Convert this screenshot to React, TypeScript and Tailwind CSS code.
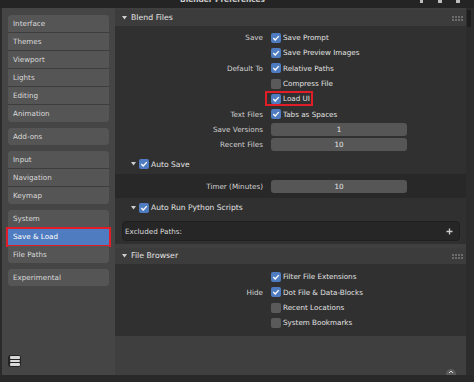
import React from "react";

type Row =
  | { label?: string; kind: "check"; text: string; on: boolean; mark?: boolean }
  | { label: string; kind: "num"; value: string };

const blendRows: Row[] = [
  { label: "Save", kind: "check", text: "Save Prompt", on: true },
  { kind: "check", text: "Save Preview Images", on: true },
  { label: "Default To", kind: "check", text: "Relative Paths", on: true },
  { kind: "check", text: "Compress File", on: false },
  { kind: "check", text: "Load UI", on: true, mark: true },
  { label: "Text Files", kind: "check", text: "Tabs as Spaces", on: true },
  { label: "Save Versions", kind: "num", value: "1" },
  { label: "Recent Files", kind: "num", value: "10" },
];

const browserRows: Row[] = [
  { kind: "check", text: "Filter File Extensions", on: true },
  { label: "Hide", kind: "check", text: "Dot File & Data-Blocks", on: true },
  { kind: "check", text: "Recent Locations", on: false },
  { kind: "check", text: "System Bookmarks", on: false },
];

const groups = [
  ["Interface", "Themes", "Viewport", "Lights", "Editing", "Animation"],
  ["Add-ons"],
  ["Input", "Navigation", "Keymap"],
  ["System", "Save & Load", "File Paths"],
  ["Experimental"],
];

const Checkbox = ({ on }: { on: boolean }) => (
  <span
    className={`flex w-[10px] h-[10px] shrink-0 items-center justify-center rounded-[2px] ${
      on ? "bg-[#4f7cc0]" : "bg-[#5a5a5a]"
    }`}
  >
    {on && (
      <svg width="10" height="10" viewBox="0 0 10 10">
        <path d="M2.3 5.1 L4.2 7 L7.8 3.1" fill="none" stroke="#fff" strokeWidth="1.4" />
      </svg>
    )}
  </span>
);

const NumField = ({ value }: { value: string }) => (
  <div className="w-[136px] h-[13px] rounded-[3px] bg-[#565656] flex items-center justify-center text-[#e6e6e6]">
    {value}
  </div>
);

const Triangle = () => (
  <svg width="5" height="4" viewBox="0 0 5 4" className="shrink-0">
    <path d="M0 0 H5 L2.5 3.5 Z" fill="#cfcfcf" />
  </svg>
);

const DragHandle = () => (
  <svg width="11" height="5" viewBox="0 0 11 5">
    {[0, 3, 6, 9].map((x) =>
      [0, 3].map((y) => <rect key={`${x}-${y}`} x={x} y={y} width="2" height="2" fill="#6b6b6b" />)
    )}
  </svg>
);

const PropRow = ({ row }: { row: Row }) => (
  <div className="flex items-center h-[15.3px]">
    <div className="w-[148px] text-right text-[#d2d2d2] pr-[0px]">{row.label ?? ""}</div>
    <div className="ml-[8px] h-full flex items-center">
      {row.kind === "check" ? (
        <div className="relative h-full flex items-center">
          <Checkbox on={row.on} />
          <span className="ml-[2px] text-[#e2e2e2] whitespace-nowrap">{row.text}</span>
          {row.mark && (
            <span className="absolute -left-[6px] -right-[3px] top-0 bottom-0 border-2 border-[#e11d27]" />
          )}
        </div>
      ) : (
        <NumField value={row.value} />
      )}
    </div>
  </div>
);

const PanelHeader = ({ title }: { title: string }) => (
  <div className="h-[16px] bg-[#3c3c3c] flex items-center pl-[7px] pr-[3px]">
    <Triangle />
    <span className="ml-[4px] text-[7.8px] text-[#e4e4e4]">{title}</span>
    <div className="ml-auto mr-[0px]">
      <DragHandle />
    </div>
  </div>
);

const SubHeader = ({ title, h }: { title: string; h: string }) => (
  <div className={`${h} flex items-center pl-[16px]`}>
    <Triangle />
    <span className="ml-[3px]">
      <Checkbox on />
    </span>
    <span className="ml-[2px] text-[7.6px] text-[#e2e2e2]">{title}</span>
  </div>
);

const Sidebar = () => (
  <div className="w-[113px] bg-[#454545] flex flex-col pt-[7px] px-[6px] pb-[8px]">
    <div className="flex flex-col gap-[6px]">
      {groups.map((g, gi) => (
        <div key={gi} className="rounded-[3px] bg-[#3d3d3d] flex flex-col gap-[1px]">
          {g.map((item, i) => {
            const active = item === "Save & Load";
            return (
              <div
                key={item}
                className={`relative h-[17px] flex items-center pl-[5px] ${
                  active ? "bg-[#4f7cc0] text-white" : "bg-[#555555] text-[#dadada]"
                } ${i === 0 ? "rounded-t-[3px]" : ""} ${i === g.length - 1 ? "rounded-b-[3px]" : ""}`}
              >
                {item}
                {active && <span className="absolute -left-[2px] -right-[2px] -top-[1px] -bottom-[2px] border-2 border-[#e11d27]" />}
              </div>
            );
          })}
        </div>
      ))}
    </div>
    <div className="mt-auto w-[13px] h-[12px] rounded-[3px] bg-[#232323] flex flex-col justify-center gap-[1px] px-[1.5px]">
      <span className="h-[2.5px] rounded-[1px] bg-[#d8d8d8]" />
      <span className="h-[2.5px] rounded-[1px] bg-[#d8d8d8]" />
      <span className="h-[2.5px] rounded-[1px] bg-[#d8d8d8]" />
    </div>
  </div>
);

const Main = () => (
  <div className="relative w-[351px] bg-[#3f3f3f] flex flex-col pt-[2px]">
    <PanelHeader title="Blend Files" />
    <div className="bg-[#303030] pt-[4px] pb-[3px]">
      {blendRows.map((r, i) => (
        <PropRow key={i} row={r} />
      ))}
      <div className="mt-[2px]">
        <SubHeader title="Auto Save" h="h-[20px]" />
      </div>
      <div className="h-[24px] bg-[#282828] flex items-center">
        <div className="w-[148px] text-right text-[#d2d2d2]">Timer (Minutes)</div>
        <div className="ml-[8px]">
          <NumField value="10" />
        </div>
      </div>
      <SubHeader title="Auto Run Python Scripts" h="h-[19px]" />
      <div className="mt-[4px] ml-[7px] mr-[6px] h-[20px] rounded-[4px] bg-[#262626] border border-[#1f1f1f] flex items-center pl-[2px] pr-[6px] text-[#dcdcdc]">
        Excluded Paths:
        <svg width="7" height="7" viewBox="0 0 7 7" className="ml-auto">
          <path d="M3.5 0.5 V6.5 M0.5 3.5 H6.5" stroke="#cfcfcf" strokeWidth="1.3" />
        </svg>
      </div>
    </div>
    <div className="mt-[4px]">
      <PanelHeader title="File Browser" />
    </div>
    <div className="bg-[#303030] pt-[5px] pb-[5px]">
      {browserRows.map((r, i) => (
        <PropRow key={i} row={r} />
      ))}
    </div>
    <div className="absolute right-[10px] bottom-0 w-[10px] h-[6px] rounded-t-[5px] bg-[#5b5b5b] flex items-center justify-center">
      <svg width="6" height="4" viewBox="0 0 6 4">
        <path d="M1 3 L3 1 L5 3" fill="none" stroke="#dcdcdc" strokeWidth="1" />
      </svg>
    </div>
  </div>
);

export default function App() {
  return (
    <div className="w-[474px] h-[382px] overflow-hidden bg-[#2a2a2a] flex flex-col font-['DejaVu_Sans',sans-serif] text-[7.2px] leading-none">
      <div className="relative h-[8px] bg-[#242424] overflow-hidden">
        <div className="absolute left-[180px] -top-[4px] text-[7.4px] text-[#d0d0d0] font-bold">Blender Preferences</div>
        <span className="absolute left-[420px] top-0 w-[3px] h-[3px] bg-[#bdbdbd]" />
        <span className="absolute left-[438px] top-0 w-[4px] h-[3px] bg-[#bdbdbd]" />
        <span className="absolute left-[456px] top-0 w-[4px] h-[3px] bg-[#bdbdbd]" />
      </div>
      <div className="flex h-[367px]">
        <div className="w-[2px] bg-[#2a2a2a]" />
        <Sidebar />
        <Main />
        <div className="w-[8px] bg-[#2c2c2c] flex flex-col pt-[2px]">
          <div className="ml-[1px] w-[4px] h-[17px] bg-[#1e1e1e]" />
        </div>
      </div>
      <div className="flex-1 bg-[#292929]" />
    </div>
  );
}
